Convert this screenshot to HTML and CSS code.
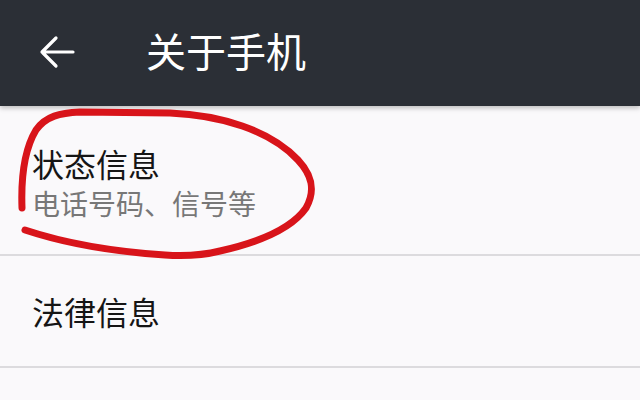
FILE: index.html
```html
<!DOCTYPE html>
<html lang="zh-CN">
<head>
<meta charset="utf-8">
<title>关于手机</title>
<link rel="stylesheet" href="styles.css">
</head>
<body>
<div class="screen">
  <header class="appbar">
    <svg class="back" width="40" height="40" viewBox="0 0 40 40" aria-hidden="true">
      <path d="M4 20 H35 M4 20 L18 6 M4 20 L18 34" fill="none" stroke="#ffffff" stroke-width="3.2" stroke-linecap="round" stroke-linejoin="round"/>
    </svg>
    <h1 class="appbar-title">关于手机</h1>
  </header>
  <ul class="list">
    <li class="item item-two">
      <div class="item-title">状态信息</div>
      <div class="item-sub">电话号码、信号等</div>
    </li>
    <li class="item item-one">
      <div class="item-title">法律信息</div>
    </li>
    <li class="item item-rest"></li>
  </ul>
  <svg class="mark" width="640" height="400" viewBox="0 0 640 400" aria-hidden="true">
    <path d="M22 208 C21 180 24 150 36 130 C46 116 60 113 80 112 L170 113 C220 115 270 130 298 160 C312 175 316 190 306 208 C292 228 260 242 220 251 C200 256 180 256 165 255 C120 252 70 245 25 230" fill="none" stroke="#d8141a" stroke-width="7" stroke-linecap="round" stroke-linejoin="round"/>
  </svg>
</div>
</body>
</html>
```
FILE: styles.css
```css
* { box-sizing: border-box; }
html, body {
  margin: 0;
  padding: 0;
  width: 640px;
  height: 400px;
  overflow: hidden;
  background: #faf9fb;
  font-family: "Noto Sans CJK SC", "Noto Sans", sans-serif;
}
.screen {
  position: relative;
  width: 640px;
  height: 400px;
  background: #faf9fb;
}
.appbar {
  height: 106px;
  background: #2b2f36;
  display: flex;
  align-items: center;
  padding-left: 38px;
  box-shadow: 0 2px 5px rgba(0,0,0,0.25);
  position: relative;
  z-index: 1;
}
.back {
  flex: none;
  margin-top: -3px;
}
.appbar-title {
  margin: 0 0 0 68px;
  color: #ffffff;
  font-size: 40px;
  font-weight: 400;
  line-height: 1;
  margin-top: -6px;
}
.list {
  list-style: none;
  margin: 0;
  padding: 0;
}
.item {
  padding-left: 32px;
  border-bottom: 2px solid #dcdbde;
  display: flex;
  flex-direction: column;
  justify-content: center;
}
.item-two {
  height: 150px;
  padding-top: 4px;
}
.item-one {
  height: 112px;
}
.item-rest {
  border-bottom: none;
}
.item-title {
  font-size: 32px;
  line-height: 40px;
  color: #151515;
}
.item-sub {
  font-size: 28px;
  line-height: 36px;
  color: #777777;
  margin-top: 2px;
}
.mark {
  position: absolute;
  left: 0;
  top: 0;
  z-index: 2;
  pointer-events: none;
}
```
